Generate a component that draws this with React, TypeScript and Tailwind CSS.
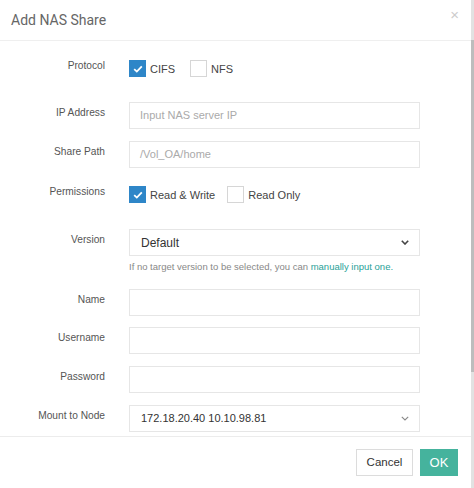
import React from "react";

const font = { fontFamily: '"Liberation Sans", Arial, sans-serif' };

function Check({ checked, label }: { checked: boolean; label: string }) {
  return (
    <div className="flex items-center">
      {checked ? (
        <span className="flex h-[17px] w-[17px] items-center justify-center bg-[#2e86c8]">
          <svg width="10" height="8" viewBox="0 0 10 8">
            <path d="M1.2 4.2 L3.8 6.6 L8.8 1.4" fill="none" stroke="#fff" strokeWidth="1.8" />
          </svg>
        </span>
      ) : (
        <span className="h-[17px] w-[17px] border border-[#d6d6d6] bg-white" />
      )}
      <span className="ml-[4px] text-[11px] leading-[14px] text-[#444]">{label}</span>
    </div>
  );
}

function Row({ label, children, className = "" }: { label: string; children: React.ReactNode; className?: string }) {
  return (
    <div className={`flex items-center ${className}`}>
      <div className="mb-[6px] w-[105px] shrink-0 text-right text-[10.2px] leading-[11px] text-[#555]">{label}</div>
      <div className="ml-[24px] w-[291px]">{children}</div>
    </div>
  );
}

function Input({ placeholder }: { placeholder?: string }) {
  return (
    <div className="flex h-[27px] items-center border border-[#e6e6e6] bg-white pl-[10px] text-[11px] text-[#aaa]">
      {placeholder ?? ""}
    </div>
  );
}

function Select({ value, dark, textSize }: { value: string; dark?: boolean; textSize: string }) {
  return (
    <div className="flex h-[27px] items-center justify-between border border-[#e6e6e6] bg-white pl-[11px] pr-[10px]">
      <span className={`${textSize} text-[#333]`}>{value}</span>
      <svg width="8" height="5" viewBox="0 0 8 5">
        <path d="M0.8 0.8 L4 4 L7.2 0.8" fill="none" stroke={dark ? "#444" : "#888"} strokeWidth={dark ? 1.6 : 1.1} />
      </svg>
    </div>
  );
}

export default function App() {
  return (
    <div className="flex h-[488px] w-[474px] overflow-hidden bg-white" style={font}>
      <div className="flex min-w-0 flex-1 flex-col">
        <div className="flex h-[41px] shrink-0 items-start justify-between border-b border-[#efefef] pr-[12px]">
          <span
            className="ml-[11px] mt-[10px] text-[14px] text-[#666]"
            style={{ fontFamily: 'Roboto, "Liberation Sans", sans-serif' }}
          >
            Add NAS Share
          </span>
          <span className="mt-[4px] text-[15px] text-[#ccc]">×</span>
        </div>

        <div className="flex flex-1 flex-col overflow-hidden">
          <Row label="Protocol" className="mt-[19px]">
            <div className="flex items-center gap-[15px]">
              <Check checked label="CIFS" />
              <Check checked={false} label="NFS" />
            </div>
          </Row>
          <Row label="IP Address" className="mt-[25px]">
            <Input placeholder="Input NAS server IP" />
          </Row>
          <Row label="Share Path" className="mt-[12px]">
            <Input placeholder="/Vol_OA/home" />
          </Row>
          <Row label="Permissions" className="mt-[18px]">
            <div className="flex items-center gap-[12px]">
              <Check checked label="Read & Write" />
              <Check checked={false} label="Read Only" />
            </div>
          </Row>
          <Row label="Version" className="mt-[26px]">
            <Select value="Default" dark textSize="text-[12px]" />
          </Row>
          <div className="ml-[129px] mt-[4px] text-[9.5px] leading-[14px] text-[#888]">
            If no target version to be selected, you can <span className="text-[#2aa198]">manually input one.</span>
          </div>
          <Row label="Name" className="mt-[15px]">
            <Input />
          </Row>
          <Row label="Username" className="mt-[11px]">
            <Input />
          </Row>
          <Row label="Password" className="mt-[12px]">
            <Input />
          </Row>
          <Row label="Mount to Node" className="mt-[12px]">
            <Select value="172.18.20.40 10.10.98.81" textSize="text-[11px]" />
          </Row>
        </div>

        <div className="flex h-[52px] shrink-0 items-start justify-end gap-[7px] border-t border-[#ececec] pr-[13px] pt-[12px]">
          <button className="h-[27px] w-[57px] border border-[#dcdcdc] bg-white text-[11.5px] text-[#333]">Cancel</button>
          <button className="h-[27px] w-[38px] bg-[#45b39d] text-[13px] text-white">OK</button>
        </div>
      </div>
      <div className="flex w-[3px] shrink-0 flex-col bg-[#e2e2e2]">
        <div className="h-[40px]" />
        <div className="h-[332px] bg-[#bdbdbd]" />
      </div>
    </div>
  );
}
